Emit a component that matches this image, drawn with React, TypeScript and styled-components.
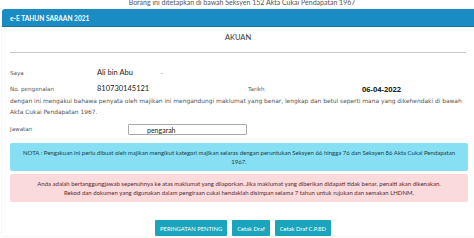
import React from 'react';
import styled, { createGlobalStyle } from 'styled-components';

const GlobalStyle = createGlobalStyle`
  html, body {
    margin: 0;
    padding: 0;
    background: #ffffff;
    overflow: hidden;
  }
  body {
    font-family: Lato, "Open Sans", sans-serif;
    color: #333;
  }
`;

const Page = styled.div`
  width: 474px;
  height: 238px;
  overflow: hidden;
`;

const Caption = styled.div`
  height: 7px;
  margin-top: -1px;
  margin-bottom: 3px;
  text-align: center;
  font-size: 7px;
  line-height: 7px;
  color: #555;
  padding-left: 10px;
`;

const Card = styled.div`
  margin-left: 2px;
  width: 482px;
  background: #fff;
  border-radius: 3px 3px 0 0;
  box-shadow: 0 0 2px rgba(0, 0, 0, 0.12);
`;

const CardHeader = styled.div`
  height: 17px;
  background: #1a8cc3;
  border-radius: 3px 3px 0 0;
  border-bottom: 1px solid #14759f;
  display: flex;
  align-items: center;
  padding-left: 8px;
  color: #fff;
  font-weight: 700;
  font-size: 6.6px;
`;

const CardBody = styled.div`
  padding: 0 16px 0 8px;
`;

const Title = styled.div`
  text-align: center;
  font-size: 7.5px;
  padding: 6px 0 10px;
  color: #333;
  border-bottom: 1px solid #c8c8c8;
  margin-bottom: 14px;
  margin-right: 2px;
`;

const Fields = styled.div`
  display: grid;
  grid-template-columns: 87px 151px 114px 1fr;
  row-gap: 4px;
  align-items: center;
`;

const Label = styled.div`
  font-family: "DejaVu Sans", Verdana, sans-serif;
  font-size: 5.6px;
  color: #555;
  height: 12px;
  line-height: 12px;
`;

const Value = styled.div<{ $bold?: boolean }>`
  font-family: ${p => (p.$bold ? '"Open Sans", sans-serif' : 'Lato, sans-serif')};
  font-weight: ${p => (p.$bold ? 700 : 400)};
  font-size: 7.5px;
  color: #222;
  height: 12px;
  line-height: 12px;
`;

const Dash = styled.span`
  margin-left: 28px;
  font-size: 6px;
  color: #666;
`;

const Statement = styled.p`
  margin: 1px 0 5px;
  font-family: "DejaVu Sans", Verdana, sans-serif;
  font-size: 5.9px;
  line-height: 11px;
  color: #555;
  white-space: nowrap;
`;

const JobRow = styled.div`
  display: flex;
  align-items: center;
`;

const JobLabel = styled(Label)`
  width: 118px;
`;

const JobInput = styled.div`
  width: 119px;
  height: 11px;
  border: 1px solid #aaa;
  border-radius: 1px;
  font-size: 7px;
  line-height: 11px;
  padding-left: 18px;
  box-sizing: border-box;
  color: #222;
`;

const Alert = styled.div<{ $tone: 'info' | 'danger' }>`
  margin-top: ${p => (p.$tone === 'info' ? '8px' : '3px')};
  height: 28px;
  box-sizing: border-box;
  border-radius: 2px;
  background: ${p => (p.$tone === 'info' ? '#86dff2' : '#fbdadb')};
  color: ${p => (p.$tone === 'info' ? '#173f4f' : '#5a2a2e')};
  font-size: 6px;
  line-height: 9px;
  text-align: center;
  display: flex;
  flex-direction: column;
  justify-content: center;
  padding: 0 12px;
`;

const Actions = styled.div`
  display: flex;
  justify-content: center;
  gap: 5px;
  padding-top: 18px;
  padding-left: 8px;
`;

const Button = styled.button`
  background: #1aa5bd;
  border: none;
  color: #fff;
  font-family: Lato, sans-serif;
  font-size: 5.8px;
  height: 16px;
  padding: 0 5px;
  border-radius: 1px;
`;

export default function App() {
  return (
    <Page>
      <GlobalStyle />
      <Caption>Borang ini ditetapkan di bawah Seksyen 152 Akta Cukai Pendapatan 1967</Caption>
      <Card>
        <CardHeader>e-E TAHUN SARAAN 2021</CardHeader>
        <CardBody>
          <Title>AKUAN</Title>
          <Fields>
            <Label>Saya</Label>
            <Value>
              Ali bin Abu<Dash>-</Dash>
            </Value>
            <div />
            <div />
            <Label>No. pengenalan</Label>
            <Value>810730145121</Value>
            <Label>Tarikh</Label>
            <Value $bold>06-04-2022</Value>
          </Fields>
          <Statement>
            dengan ini mengakui bahawa penyata oleh majikan ini mengandungi maklumat yang benar, lengkap dan betul
            seperti mana yang dikehendaki di bawah
            <br />
            Akta Cukai Pendapatan 1967.
          </Statement>
          <JobRow>
            <JobLabel>Jawatan</JobLabel>
            <JobInput>pengarah</JobInput>
          </JobRow>
          <Alert $tone="info">
            <div>
              NOTA : Pengakuan ini perlu dibuat oleh majikan mengikut kategori majikan selaras dengan peruntukan
              Seksyen 66 hingga 76 dan Seksyen 86 Akta Cukai Pendapatan 1967.
            </div>
          </Alert>
          <Alert $tone="danger">
            <div>
              Anda adalah bertanggungjawab sepenuhnya ke atas maklumat yang dilaporkan. Jika maklumat yang diberikan
              didapati tidak benar, penalti akan dikenakan.
            </div>
            <div>
              Rekod dan dokumen yang digunakan dalam pengiraan cukai hendaklah disimpan selama 7 tahun untuk rujukan
              dan semakan LHDNM.
            </div>
          </Alert>
          <Actions>
            <Button>PERINGATAN PENTING</Button>
            <Button>Cetak Draf</Button>
            <Button>Cetak Draf C.P.8D</Button>
          </Actions>
        </CardBody>
      </Card>
    </Page>
  );
}
